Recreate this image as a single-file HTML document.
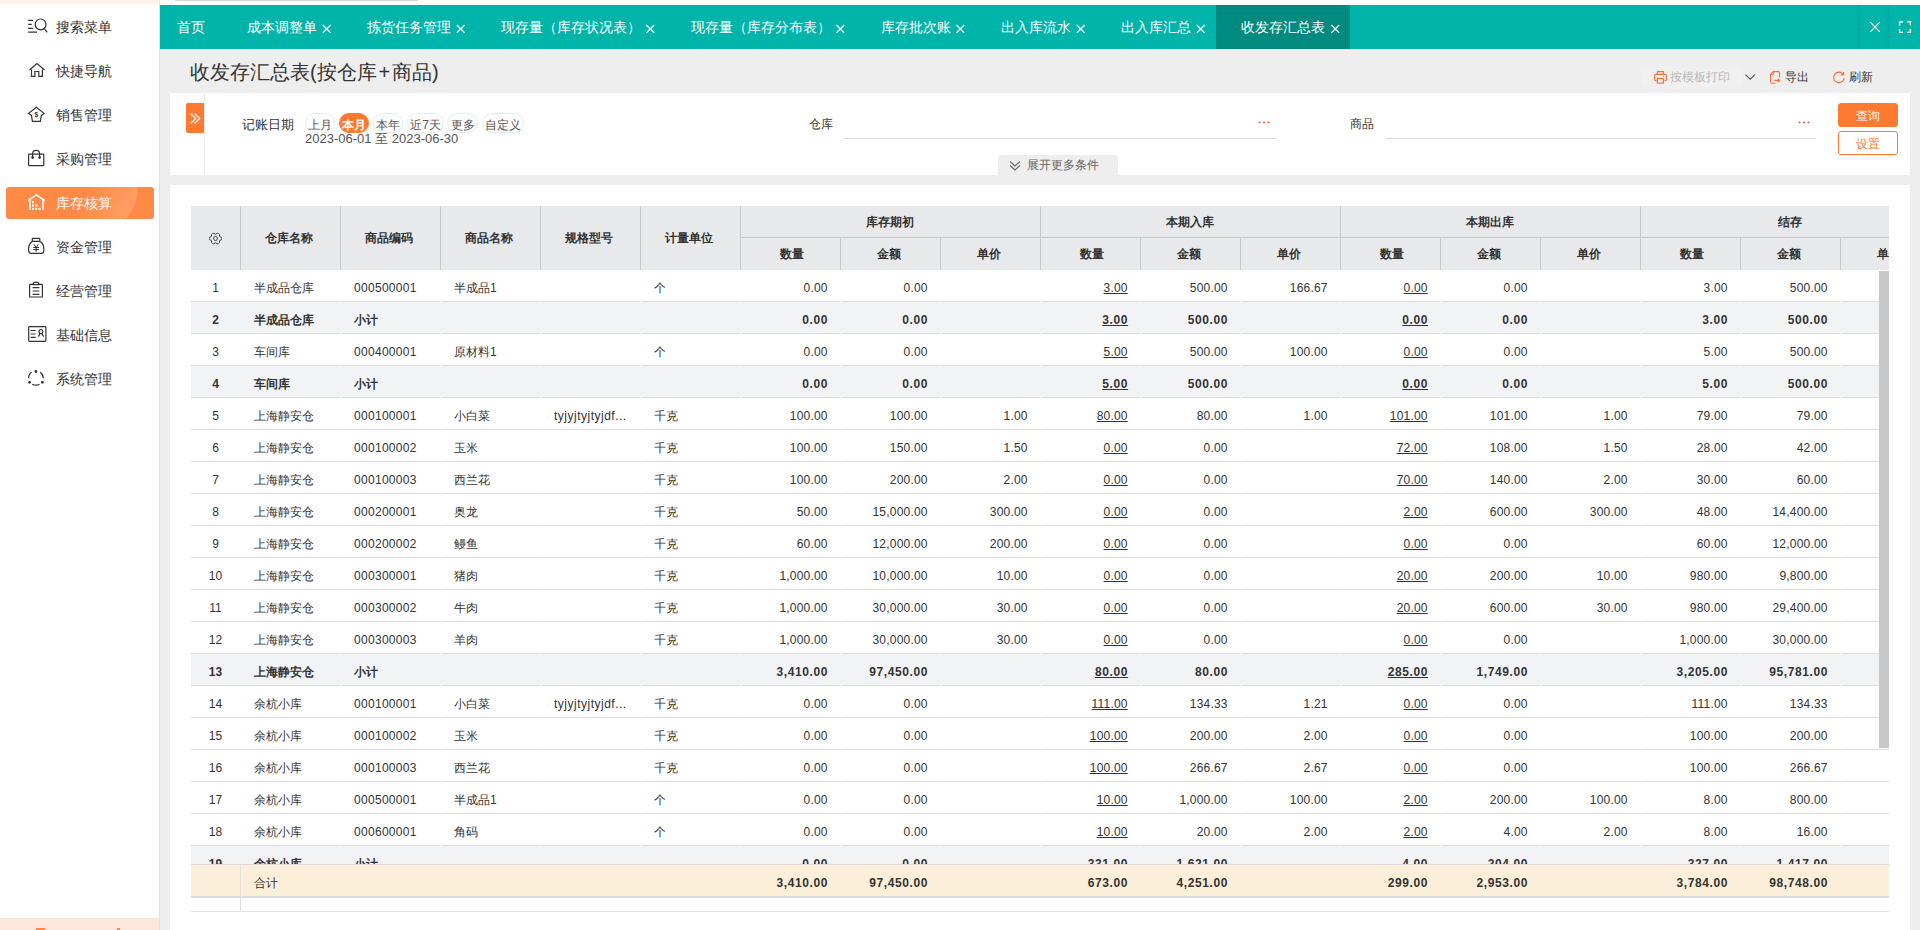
<!DOCTYPE html>
<html><head><meta charset="utf-8"><title>收发存汇总表</title>
<style>
*{margin:0;padding:0;box-sizing:border-box}
html,body{width:1920px;height:930px;overflow:hidden;background:#eeeeee;font-family:"Liberation Sans",sans-serif;color:#333}
.a{position:absolute;white-space:nowrap}
#side{position:absolute;left:0;top:0;width:160px;height:930px;background:#fff;border-right:1px solid #e2e2e2}
.mi{position:absolute;left:56px;font-size:14px;line-height:16px;color:#333}
#act{position:absolute;left:6px;top:187px;width:148px;height:32px;border-radius:3px;background:#ff8a45;overflow:hidden}
#act i{position:absolute;left:34.7px;top:-49.8px;width:97.4px;height:97.4px;border-radius:50%;background:linear-gradient(120deg,rgba(255,255,255,0) 50%,rgba(255,255,255,0.24) 100%)}
.tab{position:absolute;top:5px;height:44px;line-height:44px;font-size:14px;color:#fff;white-space:nowrap}
#title{position:absolute;left:190px;top:59px;font-size:20px;line-height:26px;color:#333;white-space:nowrap}
.flbl{position:absolute;font-size:13px;line-height:16px;color:#333;white-space:nowrap}
.chip{position:absolute;top:113px;height:20px;line-height:22px;font-size:12px;color:#555;border:1px solid #d9f1ef;border-radius:10px;text-align:center;white-space:nowrap}
.chip.on{background:#ff7a30;border-color:#ff7a30;color:#fff;font-weight:bold}
.uline{position:absolute;top:138px;height:1px;background:#d9d9d9}
.dots{position:absolute;top:121px;width:12px;height:3px}
.btn{position:absolute;left:1838px;width:60px;height:24px;border-radius:3px;font-size:12px;line-height:25px;text-align:center}
#tbl{position:absolute;left:191px;top:206px;width:1698px;height:706px;overflow:hidden;font-size:12px;color:#333}
.hd{position:absolute;left:0;top:0;width:1698px;height:64px;background:#e8e9eb}
.vl{position:absolute;width:1px;background:#c8c8c8}
.hl{position:absolute;height:1px;background:#c8c8c8}
.ht{position:absolute;font-weight:bold;text-align:center;line-height:16px;color:#333}
.rw{position:absolute;left:0;width:1698px;height:32px}
.rb{position:absolute;left:0;bottom:0;width:1698px;height:1px;background:repeating-linear-gradient(90deg,#dddddd 0,#dddddd 98px,#f0f0f0 98px,#f0f0f0 100px);background-position:51px 0}
.rw.s{background:#f2f3f5;font-weight:bold}
.c{position:absolute;top:2px;line-height:32px;white-space:nowrap}
.r{text-align:right;letter-spacing:0.2px;margin-right:-0.2px}
.rw.s .r,.b .r,.r.bb{letter-spacing:0.6px;margin-right:-0.6px}
.cd{letter-spacing:0.3px}
.u{text-decoration:underline}
</style></head><body>

<div id="side">
<div class="a" style="left:0;top:0;width:159px;height:5px;background:#fff2ea"></div>
<div id="act"><i></i></div>
<div class="mi" style="top:19px;color:#333">搜索菜单</div>
<div class="mi" style="top:63px;color:#333">快捷导航</div>
<div class="mi" style="top:107px;color:#333">销售管理</div>
<div class="mi" style="top:151px;color:#333">采购管理</div>
<div class="mi" style="top:195px;color:#fff">库存核算</div>
<div class="mi" style="top:239px;color:#333">资金管理</div>
<div class="mi" style="top:283px;color:#333">经营管理</div>
<div class="mi" style="top:327px;color:#333">基础信息</div>
<div class="mi" style="top:371px;color:#333">系统管理</div>
<div class="a" style="left:0;top:918px;width:159px;height:12px;background:#fde6dc"></div>
<div class="a" style="left:36px;top:928px;width:9px;height:2px;background:#ff8a50"></div><div class="a" style="left:117px;top:928px;width:3px;height:2px;background:#ff8a50"></div>
<svg class="a" style="left:0;top:0" width="60" height="400" viewBox="0 0 60 400" fill="none" stroke="#333" stroke-width="1.2">
<path d="M28.2 20.4H33M28.2 24.3H31.8M28.2 28.4H33M28.2 32.2H37"/>
<circle cx="40.6" cy="24.4" r="5.4"/><path d="M44.4 28.6L47.2 32.4"/>
<path d="M29.5 70L37 63.5L44.5 70M31.5 69.5V76.4H34.9V71.5H38.8V76.4H42.4V69.5"/>
<path d="M36.3 107.2L28.6 113.4L31.4 115.4L32.4 121.3H40.3L41.4 115.4L44 113.4Z"/>
<text x="36.3" y="117.4" font-size="6.5" font-weight="bold" text-anchor="middle" fill="#333" stroke="none" font-family="Liberation Sans">$</text>
<rect x="28.6" y="154.2" width="15.2" height="11.4" rx="0.6"/>
<path d="M32.6 157.4V153.6A3.5 3.3 0 0 1 39.6 153.6V157.4"/>
<circle cx="32.6" cy="157.6" r="0.8" fill="#333"/><circle cx="39.6" cy="157.6" r="0.8" fill="#333"/>
<g stroke="#fff" stroke-width="1.5"><path d="M28 200.6L36.3 194.8L44.8 200.6M30 199.4V210M43 199.4V210"/></g>
<g fill="#fff" stroke="none"><rect x="32" y="201.2" width="2" height="2"/><rect x="32" y="204.5" width="2" height="2"/><rect x="35.3" y="204.5" width="2" height="2"/><rect x="32" y="207.9" width="2" height="2"/><rect x="35.3" y="207.9" width="2" height="2"/><rect x="38.6" y="207.9" width="2" height="2"/></g>
<rect x="32.3" y="238.4" width="7.5" height="3" rx="0.5"/>
<path d="M32.2 241.6C29.5 243 28.6 246 28.6 249.5C28.6 252 29.5 253.4 31.2 253.4H41.4C43.1 253.4 43.9 252 43.9 249.5C43.9 246 43 243 40 241.6"/>
<path d="M33.8 244.2L36.1 247.4L38.4 244.2M33.2 247.5H39M33.2 249.6H39M36.1 247.4V251.8" stroke-width="1"/>
<path d="M33 284.4H30.2Q29.6 284.4 29.6 285V297H42.4V285Q42.4 284.4 41.8 284.4H39"/>
<path d="M33 284.6Q33 282.2 36 282.2Q39 282.2 39 284.6Z"/>
<path d="M32.6 287.6H39.4M32.6 291H39.4M32.6 294.4H39.4" stroke-width="1.1"/>
<rect x="28.7" y="326.6" width="17.2" height="14.8" rx="0.8"/>
<path d="M30.6 330.5H35.6M30.6 334H35.6M30.6 337.4H35.6" stroke-width="1.1"/>
<circle cx="41" cy="331.6" r="1.9"/><path d="M38.5 336.6L40.2 333.4M43.6 336.6L41.8 333.4"/>
<circle cx="35.9" cy="371.5" r="1.4" fill="#333" stroke="none"/><circle cx="29.5" cy="382.3" r="1.4" fill="#333" stroke="none"/><circle cx="42.4" cy="382.3" r="1.4" fill="#333" stroke="none"/>
<path d="M31.6 372.2A7 7 0 0 0 28.6 378.2M40.2 372.2A7 7 0 0 1 43.2 378.2M32.2 384.2A7 6 0 0 0 39.6 384.2"/>
</svg>
</div>
<div class="a" style="left:160px;top:0;width:1760px;height:5px;background:#fff"></div>
<div class="a" style="left:175px;top:0;width:243px;height:1px;background:#d9d9d9"></div>
<div class="a" style="left:160px;top:5px;width:1760px;height:44px;background:#00b4aa"></div>
<div class="a" style="left:1216px;top:5px;width:134px;height:44px;background:#008a80"></div>
<div class="tab" style="left:177px">首页</div>
<div class="tab" style="left:247px">成本调整单</div>
<div class="tab" style="left:367px">拣货任务管理</div>
<div class="tab" style="left:501px">现存量（库存状况表）</div>
<div class="tab" style="left:691px">现存量（库存分布表）</div>
<div class="tab" style="left:881px">库存批次账</div>
<div class="tab" style="left:1001px">出入库流水</div>
<div class="tab" style="left:1121px">出入库汇总</div>
<div class="tab" style="left:1241px">收发存汇总表</div>
<svg class="a" style="left:0;top:0" width="1920" height="50" viewBox="0 0 1920 50" fill="none" stroke="#fff" stroke-width="1.3"><path d="M322.8 25L330.7 32.9M330.7 25L322.8 32.9"/><path d="M456.8 25L464.7 32.9M464.7 25L456.8 32.9"/><path d="M646.3 25L654.2 32.9M654.2 25L646.3 32.9"/><path d="M836.3 25L844.2 32.9M844.2 25L836.3 32.9"/><path d="M956.3 25L964.2 32.9M964.2 25L956.3 32.9"/><path d="M1076.8 25L1084.7 32.9M1084.7 25L1076.8 32.9"/><path d="M1196.8 25L1204.7 32.9M1204.7 25L1196.8 32.9"/><path d="M1331.3 25L1339.2 32.9M1339.2 25L1331.3 32.9"/><path d="M1870.3 22.2L1879.8 31.8M1879.8 22.2L1870.3 31.8" stroke-width="1.2"/><path d="M1899.6 25.5V21.8H1903M1907.2 21.8H1910.4V25.5M1910.4 29V32.4H1907.2M1903 32.4H1899.6V29" stroke-width="1.4"/></svg>
<div class="a" style="left:1855px;top:5px;width:5px;height:44px;background:linear-gradient(90deg,rgba(0,0,0,0),rgba(0,0,0,0.06))"></div>
<div class="a" style="left:1885px;top:5px;width:5px;height:44px;background:linear-gradient(90deg,rgba(0,0,0,0),rgba(0,0,0,0.06))"></div>
<div id="title">收发存汇总表(按仓库<span style="margin:0 1.8px">+</span>商品)</div>
<div class="a" style="left:1641px;top:67px;width:102px;height:20px;background:#f0f0f0;border-radius:3px"></div>
<div class="a" style="left:1670px;top:69px;font-size:12px;line-height:16px;color:#b9b9b9">按模板打印</div>
<div class="a" style="left:1785px;top:69px;font-size:12px;line-height:16px;color:#333">导出</div>
<div class="a" style="left:1849px;top:69px;font-size:12px;line-height:16px;color:#333">刷新</div>
<svg class="a" style="left:1640px;top:60px" width="240" height="30" viewBox="1640 60 240 30" fill="none" stroke="#ff6a3a" stroke-width="1.1">
<path d="M1657.3 74V71.6H1663.4V74"/><path d="M1656.8 80.8H1655.8Q1654.6 80.8 1654.6 79.6V75.5Q1654.6 74.4 1655.8 74.4H1665.2Q1666.4 74.4 1666.4 75.5V79.6Q1666.4 80.8 1665.2 80.8H1664.2"/><rect x="1657.3" y="78.5" width="6.1" height="4.6"/><circle cx="1663.5" cy="76.4" r="0.5" fill="#ff6a3a" stroke="none"/>
<path d="M1745.4 74.6L1750.2 79.2L1755 74.6" stroke="#555" stroke-width="1.1"/>
<path d="M1779.5 77.6V72.8Q1779.5 71.6 1778.3 71.6H1773.2L1770.6 74.2V82Q1770.6 83.2 1771.8 83.2H1775.4"/><path d="M1773.6 71.8V74.4H1770.8" stroke-width="0.9"/>
<path d="M1774.2 80.4H1779.6M1777.9 78.7L1779.6 80.4L1777.9 82.1" stroke-width="1.1"/>
<path d="M1843.2 74.3A5.3 5.3 0 1 0 1844.2 78.2"/><path d="M1840.9 74.8H1843.6V72" stroke-width="1.2"/>
</svg>
<div class="a" style="left:170px;top:93px;width:1740px;height:82px;background:#fff"></div>
<div class="a" style="left:204px;top:93px;width:1px;height:82px;background:#eeeeee"></div>
<div class="a" style="left:186px;top:103px;width:18px;height:30px;background:#ff7a30;border-radius:2px 0 0 2px"></div>
<svg class="a" style="left:186px;top:103px" width="18" height="30" viewBox="0 0 18 30" fill="none" stroke="#fff" stroke-width="1.3"><path d="M4.6 10.4L9.8 15.5L4.6 20.6M8.5 10.4L13.7 15.5L8.5 20.6"/></svg>
<div class="flbl" style="left:242px;top:117px">记账日期</div>
<div class="chip" style="left:305px;width:30px">上月</div>
<div class="chip on" style="left:339px;width:30px">本月</div>
<div class="chip" style="left:373px;width:30px">本年</div>
<div class="chip" style="left:407px;width:37px">近7天</div>
<div class="chip" style="left:447px;width:31px">更多</div>
<div class="chip" style="left:482px;width:42px">自定义</div>
<div class="flbl" style="left:305px;top:131px;color:#555">2023-06-01 至 2023-06-30</div>
<div class="flbl" style="left:809px;top:116px;font-size:12px">仓库</div>
<div class="uline" style="left:845px;width:431px"></div>
<div class="flbl" style="left:1350px;top:116px;font-size:12px">商品</div>
<div class="uline" style="left:1386px;width:430px"></div>
<svg class="dots" style="left:1258px" viewBox="0 0 12 3"><circle cx="1.5" cy="1.5" r="1.1" fill="#ff5a3c"/><circle cx="6" cy="1.5" r="1.1" fill="#ff5a3c"/><circle cx="10.5" cy="1.5" r="1.1" fill="#ff5a3c"/></svg>
<svg class="dots" style="left:1798px" viewBox="0 0 12 3"><circle cx="1.5" cy="1.5" r="1.1" fill="#ff5a3c"/><circle cx="6" cy="1.5" r="1.1" fill="#ff5a3c"/><circle cx="10.5" cy="1.5" r="1.1" fill="#ff5a3c"/></svg>
<div class="btn" style="top:103px;background:#ff7a30;color:#fff;border:1px solid #ff7a30">查询</div>
<div class="btn" style="top:131px;background:#fff;color:#ff7a30;border:1px solid #ff7a30">设置</div>
<div class="a" style="left:998px;top:155px;width:120px;height:20px;background:#eeeeee;border-radius:4px 4px 0 0"></div>
<svg class="a" style="left:1008px;top:159px" width="14" height="14" viewBox="0 0 14 14" fill="none" stroke="#666" stroke-width="1.1"><path d="M2 2.5L7 7L12 2.5M2 6.5L7 11L12 6.5"/></svg>
<div class="a" style="left:1027px;top:157px;font-size:12px;line-height:16px;color:#666">展开更多条件</div>
<div class="a" style="left:170px;top:185px;width:1740px;height:745px;background:#fff"></div>
<div id="tbl"><div class="hd"></div><div class="vl" style="left:49px;top:0;height:64px"></div><div class="vl" style="left:149px;top:0;height:64px"></div><div class="vl" style="left:249px;top:0;height:64px"></div><div class="vl" style="left:349px;top:0;height:64px"></div><div class="vl" style="left:449px;top:0;height:64px"></div><div class="vl" style="left:549px;top:0;height:64px"></div><div class="vl" style="left:849px;top:0;height:64px"></div><div class="vl" style="left:1149px;top:0;height:64px"></div><div class="vl" style="left:1449px;top:0;height:64px"></div><div class="vl" style="left:649px;top:32px;height:32px"></div><div class="vl" style="left:749px;top:32px;height:32px"></div><div class="vl" style="left:949px;top:32px;height:32px"></div><div class="vl" style="left:1049px;top:32px;height:32px"></div><div class="vl" style="left:1249px;top:32px;height:32px"></div><div class="vl" style="left:1349px;top:32px;height:32px"></div><div class="vl" style="left:1549px;top:32px;height:32px"></div><div class="vl" style="left:1649px;top:32px;height:32px"></div><div class="hl" style="left:549px;top:31px;width:1149px"></div><div class="ht" style="left:47.5px;top:24px;width:100px">仓库名称</div><div class="ht" style="left:147.5px;top:24px;width:100px">商品编码</div><div class="ht" style="left:247.5px;top:24px;width:100px">商品名称</div><div class="ht" style="left:347.5px;top:24px;width:100px">规格型号</div><div class="ht" style="left:447.5px;top:24px;width:100px">计量单位</div><svg class="a" style="left:18px;top:26px" width="13" height="13" viewBox="0 0 13 13" fill="none" stroke="#444" stroke-width="1"><path d="M12.35 5.26Q12.98 6.50 12.35 7.74L10.48 8.62L10.59 10.54Q9.74 11.66 8.25 11.78L6.50 10.73L4.75 11.78Q3.26 11.66 2.41 10.54L2.52 8.62L0.65 7.74Q0.02 6.50 0.65 5.26L2.52 4.38L2.41 2.46Q3.26 1.34 4.75 1.22L6.50 2.27L8.25 1.22Q9.74 1.34 10.59 2.46L10.48 4.38Z"/><ellipse cx="6.5" cy="6.5" rx="1.9" ry="2.1"/></svg><div class="ht" style="left:549px;top:8px;width:300px">库存期初</div><div class="ht" style="left:551px;top:40px;width:100px">数量</div><div class="ht" style="left:647.5px;top:40px;width:100px">金额</div><div class="ht" style="left:747.5px;top:40px;width:100px">单价</div><div class="ht" style="left:849px;top:8px;width:300px">本期入库</div><div class="ht" style="left:851px;top:40px;width:100px">数量</div><div class="ht" style="left:947.5px;top:40px;width:100px">金额</div><div class="ht" style="left:1047.5px;top:40px;width:100px">单价</div><div class="ht" style="left:1149px;top:8px;width:300px">本期出库</div><div class="ht" style="left:1151px;top:40px;width:100px">数量</div><div class="ht" style="left:1247.5px;top:40px;width:100px">金额</div><div class="ht" style="left:1347.5px;top:40px;width:100px">单价</div><div class="ht" style="left:1449px;top:8px;width:300px">结存</div><div class="ht" style="left:1451px;top:40px;width:100px">数量</div><div class="ht" style="left:1547.5px;top:40px;width:100px">金额</div><div class="ht" style="left:1647.5px;top:40px;width:100px">单价</div><div class="rw" style="top:64px"><div class="rb"></div><div class="c" style="left:0;width:49px;text-align:center">1</div><div class="c" style="left:63px">半成品仓库</div><div class="c cd" style="left:163px">000500001</div><div class="c" style="left:263px">半成品1</div><div class="c" style="left:463px">个</div><div class="c r" style="right:1061.5px">0.00</div><div class="c r" style="right:961.5px">0.00</div><div class="c r u" style="right:761.5px">3.00</div><div class="c r" style="right:661.5px">500.00</div><div class="c r" style="right:561.5px">166.67</div><div class="c r u" style="right:461.5px">0.00</div><div class="c r" style="right:361.5px">0.00</div><div class="c r" style="right:161.5px">3.00</div><div class="c r" style="right:61.5px">500.00</div></div><div class="rw s" style="top:96px"><div class="rb"></div><div class="c" style="left:0;width:49px;text-align:center">2</div><div class="c" style="left:63px">半成品仓库</div><div class="c" style="left:163px">小计</div><div class="c r" style="right:1061.5px">0.00</div><div class="c r" style="right:961.5px">0.00</div><div class="c r u" style="right:761.5px">3.00</div><div class="c r" style="right:661.5px">500.00</div><div class="c r u" style="right:461.5px">0.00</div><div class="c r" style="right:361.5px">0.00</div><div class="c r" style="right:161.5px">3.00</div><div class="c r" style="right:61.5px">500.00</div></div><div class="rw" style="top:128px"><div class="rb"></div><div class="c" style="left:0;width:49px;text-align:center">3</div><div class="c" style="left:63px">车间库</div><div class="c cd" style="left:163px">000400001</div><div class="c" style="left:263px">原材料1</div><div class="c" style="left:463px">个</div><div class="c r" style="right:1061.5px">0.00</div><div class="c r" style="right:961.5px">0.00</div><div class="c r u" style="right:761.5px">5.00</div><div class="c r" style="right:661.5px">500.00</div><div class="c r" style="right:561.5px">100.00</div><div class="c r u" style="right:461.5px">0.00</div><div class="c r" style="right:361.5px">0.00</div><div class="c r" style="right:161.5px">5.00</div><div class="c r" style="right:61.5px">500.00</div></div><div class="rw s" style="top:160px"><div class="rb"></div><div class="c" style="left:0;width:49px;text-align:center">4</div><div class="c" style="left:63px">车间库</div><div class="c" style="left:163px">小计</div><div class="c r" style="right:1061.5px">0.00</div><div class="c r" style="right:961.5px">0.00</div><div class="c r u" style="right:761.5px">5.00</div><div class="c r" style="right:661.5px">500.00</div><div class="c r u" style="right:461.5px">0.00</div><div class="c r" style="right:361.5px">0.00</div><div class="c r" style="right:161.5px">5.00</div><div class="c r" style="right:61.5px">500.00</div></div><div class="rw" style="top:192px"><div class="rb"></div><div class="c" style="left:0;width:49px;text-align:center">5</div><div class="c" style="left:63px">上海静安仓</div><div class="c cd" style="left:163px">000100001</div><div class="c" style="left:263px">小白菜</div><div class="c" style="left:363px;letter-spacing:0.5px">tyjyjtyjtyjdf...</div><div class="c" style="left:463px">千克</div><div class="c r" style="right:1061.5px">100.00</div><div class="c r" style="right:961.5px">100.00</div><div class="c r" style="right:861.5px">1.00</div><div class="c r u" style="right:761.5px">80.00</div><div class="c r" style="right:661.5px">80.00</div><div class="c r" style="right:561.5px">1.00</div><div class="c r u" style="right:461.5px">101.00</div><div class="c r" style="right:361.5px">101.00</div><div class="c r" style="right:261.5px">1.00</div><div class="c r" style="right:161.5px">79.00</div><div class="c r" style="right:61.5px">79.00</div></div><div class="rw" style="top:224px"><div class="rb"></div><div class="c" style="left:0;width:49px;text-align:center">6</div><div class="c" style="left:63px">上海静安仓</div><div class="c cd" style="left:163px">000100002</div><div class="c" style="left:263px">玉米</div><div class="c" style="left:463px">千克</div><div class="c r" style="right:1061.5px">100.00</div><div class="c r" style="right:961.5px">150.00</div><div class="c r" style="right:861.5px">1.50</div><div class="c r u" style="right:761.5px">0.00</div><div class="c r" style="right:661.5px">0.00</div><div class="c r u" style="right:461.5px">72.00</div><div class="c r" style="right:361.5px">108.00</div><div class="c r" style="right:261.5px">1.50</div><div class="c r" style="right:161.5px">28.00</div><div class="c r" style="right:61.5px">42.00</div></div><div class="rw" style="top:256px"><div class="rb"></div><div class="c" style="left:0;width:49px;text-align:center">7</div><div class="c" style="left:63px">上海静安仓</div><div class="c cd" style="left:163px">000100003</div><div class="c" style="left:263px">西兰花</div><div class="c" style="left:463px">千克</div><div class="c r" style="right:1061.5px">100.00</div><div class="c r" style="right:961.5px">200.00</div><div class="c r" style="right:861.5px">2.00</div><div class="c r u" style="right:761.5px">0.00</div><div class="c r" style="right:661.5px">0.00</div><div class="c r u" style="right:461.5px">70.00</div><div class="c r" style="right:361.5px">140.00</div><div class="c r" style="right:261.5px">2.00</div><div class="c r" style="right:161.5px">30.00</div><div class="c r" style="right:61.5px">60.00</div></div><div class="rw" style="top:288px"><div class="rb"></div><div class="c" style="left:0;width:49px;text-align:center">8</div><div class="c" style="left:63px">上海静安仓</div><div class="c cd" style="left:163px">000200001</div><div class="c" style="left:263px">奥龙</div><div class="c" style="left:463px">千克</div><div class="c r" style="right:1061.5px">50.00</div><div class="c r" style="right:961.5px">15,000.00</div><div class="c r" style="right:861.5px">300.00</div><div class="c r u" style="right:761.5px">0.00</div><div class="c r" style="right:661.5px">0.00</div><div class="c r u" style="right:461.5px">2.00</div><div class="c r" style="right:361.5px">600.00</div><div class="c r" style="right:261.5px">300.00</div><div class="c r" style="right:161.5px">48.00</div><div class="c r" style="right:61.5px">14,400.00</div></div><div class="rw" style="top:320px"><div class="rb"></div><div class="c" style="left:0;width:49px;text-align:center">9</div><div class="c" style="left:63px">上海静安仓</div><div class="c cd" style="left:163px">000200002</div><div class="c" style="left:263px">鳗鱼</div><div class="c" style="left:463px">千克</div><div class="c r" style="right:1061.5px">60.00</div><div class="c r" style="right:961.5px">12,000.00</div><div class="c r" style="right:861.5px">200.00</div><div class="c r u" style="right:761.5px">0.00</div><div class="c r" style="right:661.5px">0.00</div><div class="c r u" style="right:461.5px">0.00</div><div class="c r" style="right:361.5px">0.00</div><div class="c r" style="right:161.5px">60.00</div><div class="c r" style="right:61.5px">12,000.00</div></div><div class="rw" style="top:352px"><div class="rb"></div><div class="c" style="left:0;width:49px;text-align:center">10</div><div class="c" style="left:63px">上海静安仓</div><div class="c cd" style="left:163px">000300001</div><div class="c" style="left:263px">猪肉</div><div class="c" style="left:463px">千克</div><div class="c r" style="right:1061.5px">1,000.00</div><div class="c r" style="right:961.5px">10,000.00</div><div class="c r" style="right:861.5px">10.00</div><div class="c r u" style="right:761.5px">0.00</div><div class="c r" style="right:661.5px">0.00</div><div class="c r u" style="right:461.5px">20.00</div><div class="c r" style="right:361.5px">200.00</div><div class="c r" style="right:261.5px">10.00</div><div class="c r" style="right:161.5px">980.00</div><div class="c r" style="right:61.5px">9,800.00</div></div><div class="rw" style="top:384px"><div class="rb"></div><div class="c" style="left:0;width:49px;text-align:center">11</div><div class="c" style="left:63px">上海静安仓</div><div class="c cd" style="left:163px">000300002</div><div class="c" style="left:263px">牛肉</div><div class="c" style="left:463px">千克</div><div class="c r" style="right:1061.5px">1,000.00</div><div class="c r" style="right:961.5px">30,000.00</div><div class="c r" style="right:861.5px">30.00</div><div class="c r u" style="right:761.5px">0.00</div><div class="c r" style="right:661.5px">0.00</div><div class="c r u" style="right:461.5px">20.00</div><div class="c r" style="right:361.5px">600.00</div><div class="c r" style="right:261.5px">30.00</div><div class="c r" style="right:161.5px">980.00</div><div class="c r" style="right:61.5px">29,400.00</div></div><div class="rw" style="top:416px"><div class="rb"></div><div class="c" style="left:0;width:49px;text-align:center">12</div><div class="c" style="left:63px">上海静安仓</div><div class="c cd" style="left:163px">000300003</div><div class="c" style="left:263px">羊肉</div><div class="c" style="left:463px">千克</div><div class="c r" style="right:1061.5px">1,000.00</div><div class="c r" style="right:961.5px">30,000.00</div><div class="c r" style="right:861.5px">30.00</div><div class="c r u" style="right:761.5px">0.00</div><div class="c r" style="right:661.5px">0.00</div><div class="c r u" style="right:461.5px">0.00</div><div class="c r" style="right:361.5px">0.00</div><div class="c r" style="right:161.5px">1,000.00</div><div class="c r" style="right:61.5px">30,000.00</div></div><div class="rw s" style="top:448px"><div class="rb"></div><div class="c" style="left:0;width:49px;text-align:center">13</div><div class="c" style="left:63px">上海静安仓</div><div class="c" style="left:163px">小计</div><div class="c r" style="right:1061.5px">3,410.00</div><div class="c r" style="right:961.5px">97,450.00</div><div class="c r u" style="right:761.5px">80.00</div><div class="c r" style="right:661.5px">80.00</div><div class="c r u" style="right:461.5px">285.00</div><div class="c r" style="right:361.5px">1,749.00</div><div class="c r" style="right:161.5px">3,205.00</div><div class="c r" style="right:61.5px">95,781.00</div></div><div class="rw" style="top:480px"><div class="rb"></div><div class="c" style="left:0;width:49px;text-align:center">14</div><div class="c" style="left:63px">余杭小库</div><div class="c cd" style="left:163px">000100001</div><div class="c" style="left:263px">小白菜</div><div class="c" style="left:363px;letter-spacing:0.5px">tyjyjtyjtyjdf...</div><div class="c" style="left:463px">千克</div><div class="c r" style="right:1061.5px">0.00</div><div class="c r" style="right:961.5px">0.00</div><div class="c r u" style="right:761.5px">111.00</div><div class="c r" style="right:661.5px">134.33</div><div class="c r" style="right:561.5px">1.21</div><div class="c r u" style="right:461.5px">0.00</div><div class="c r" style="right:361.5px">0.00</div><div class="c r" style="right:161.5px">111.00</div><div class="c r" style="right:61.5px">134.33</div></div><div class="rw" style="top:512px"><div class="rb"></div><div class="c" style="left:0;width:49px;text-align:center">15</div><div class="c" style="left:63px">余杭小库</div><div class="c cd" style="left:163px">000100002</div><div class="c" style="left:263px">玉米</div><div class="c" style="left:463px">千克</div><div class="c r" style="right:1061.5px">0.00</div><div class="c r" style="right:961.5px">0.00</div><div class="c r u" style="right:761.5px">100.00</div><div class="c r" style="right:661.5px">200.00</div><div class="c r" style="right:561.5px">2.00</div><div class="c r u" style="right:461.5px">0.00</div><div class="c r" style="right:361.5px">0.00</div><div class="c r" style="right:161.5px">100.00</div><div class="c r" style="right:61.5px">200.00</div></div><div class="rw" style="top:544px"><div class="rb"></div><div class="c" style="left:0;width:49px;text-align:center">16</div><div class="c" style="left:63px">余杭小库</div><div class="c cd" style="left:163px">000100003</div><div class="c" style="left:263px">西兰花</div><div class="c" style="left:463px">千克</div><div class="c r" style="right:1061.5px">0.00</div><div class="c r" style="right:961.5px">0.00</div><div class="c r u" style="right:761.5px">100.00</div><div class="c r" style="right:661.5px">266.67</div><div class="c r" style="right:561.5px">2.67</div><div class="c r u" style="right:461.5px">0.00</div><div class="c r" style="right:361.5px">0.00</div><div class="c r" style="right:161.5px">100.00</div><div class="c r" style="right:61.5px">266.67</div></div><div class="rw" style="top:576px"><div class="rb"></div><div class="c" style="left:0;width:49px;text-align:center">17</div><div class="c" style="left:63px">余杭小库</div><div class="c cd" style="left:163px">000500001</div><div class="c" style="left:263px">半成品1</div><div class="c" style="left:463px">个</div><div class="c r" style="right:1061.5px">0.00</div><div class="c r" style="right:961.5px">0.00</div><div class="c r u" style="right:761.5px">10.00</div><div class="c r" style="right:661.5px">1,000.00</div><div class="c r" style="right:561.5px">100.00</div><div class="c r u" style="right:461.5px">2.00</div><div class="c r" style="right:361.5px">200.00</div><div class="c r" style="right:261.5px">100.00</div><div class="c r" style="right:161.5px">8.00</div><div class="c r" style="right:61.5px">800.00</div></div><div class="rw" style="top:608px"><div class="rb"></div><div class="c" style="left:0;width:49px;text-align:center">18</div><div class="c" style="left:63px">余杭小库</div><div class="c cd" style="left:163px">000600001</div><div class="c" style="left:263px">角码</div><div class="c" style="left:463px">个</div><div class="c r" style="right:1061.5px">0.00</div><div class="c r" style="right:961.5px">0.00</div><div class="c r u" style="right:761.5px">10.00</div><div class="c r" style="right:661.5px">20.00</div><div class="c r" style="right:561.5px">2.00</div><div class="c r u" style="right:461.5px">2.00</div><div class="c r" style="right:361.5px">4.00</div><div class="c r" style="right:261.5px">2.00</div><div class="c r" style="right:161.5px">8.00</div><div class="c r" style="right:61.5px">16.00</div></div><div class="rw s" style="top:640px"><div class="rb"></div><div class="c" style="left:0;width:49px;text-align:center">19</div><div class="c" style="left:63px">余杭小库</div><div class="c" style="left:163px">小计</div><div class="c r" style="right:1061.5px">0.00</div><div class="c r" style="right:961.5px">0.00</div><div class="c r u" style="right:761.5px">331.00</div><div class="c r" style="right:661.5px">1,621.00</div><div class="c r u" style="right:461.5px">4.00</div><div class="c r" style="right:361.5px">204.00</div><div class="c r" style="right:161.5px">327.00</div><div class="c r" style="right:61.5px">1,417.00</div></div><div class="a" style="left:1688px;top:65px;width:10px;height:477px;background:#c8c8c8"></div><div class="a" style="left:0;top:658px;width:1698px;height:1px;background:#d9d9d9"></div><div class="rw" style="top:659px;height:33px;background:#fcefda;border-bottom:2px solid #dcdddf"><div class="c" style="left:63px;line-height:32px">合计</div><div class="c r bb" style="right:1061.5px;font-weight:bold">3,410.00</div><div class="c r bb" style="right:961.5px;font-weight:bold">97,450.00</div><div class="c r bb" style="right:761.5px;font-weight:bold">673.00</div><div class="c r bb" style="right:661.5px;font-weight:bold">4,251.00</div><div class="c r bb" style="right:461.5px;font-weight:bold">299.00</div><div class="c r bb" style="right:361.5px;font-weight:bold">2,953.00</div><div class="c r bb" style="right:161.5px;font-weight:bold">3,784.00</div><div class="c r bb" style="right:61.5px;font-weight:bold">98,748.00</div></div><div class="vl" style="left:49px;top:659px;height:46px;background:#e0e0e0"></div><div class="hl" style="left:0;top:705px;width:1698px;background:#e3e3e3"></div></div>

</body></html>
